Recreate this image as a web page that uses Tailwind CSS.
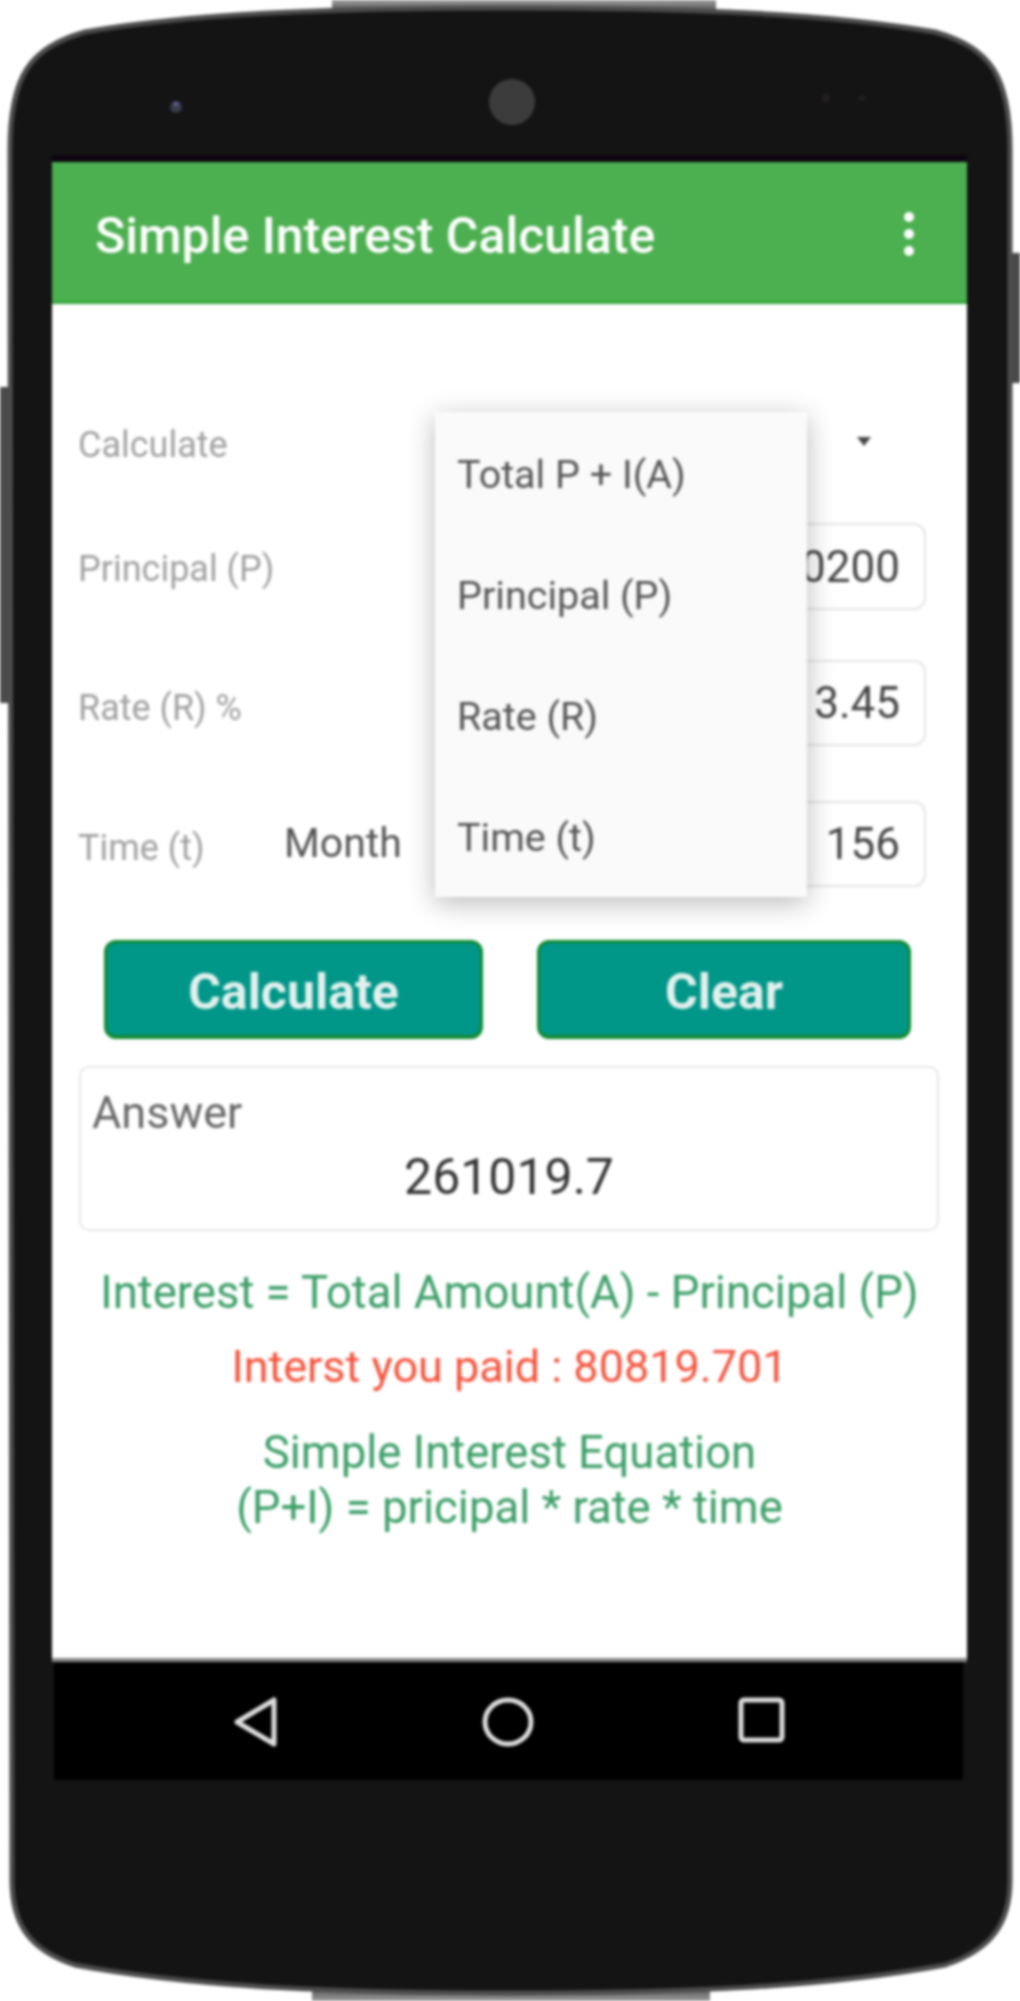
<!DOCTYPE html>
<html><head><meta charset="utf-8"><title>Simple Interest Calculate</title>
<script src="https://cdn.jsdelivr.net/npm/@tailwindcss/browser@4"></script></head>
<body class="m-0 bg-white">
<div class="relative w-[1020px] h-[2001px] overflow-hidden bg-white font-['Roboto',sans-serif] blur-[1.4px]">
  <svg class="absolute inset-0" width="1020" height="2001" viewBox="0 0 1020 2001" fill="none">
    <defs>
      <linearGradient id="topBump" x1="0" y1="0" x2="0" y2="1"><stop offset="0" stop-color="#9a9a9a"/><stop offset="1" stop-color="#444"/></linearGradient>
      <linearGradient id="bottomBump" x1="0" y1="1" x2="0" y2="0"><stop offset="0" stop-color="#9a9a9a"/><stop offset="1" stop-color="#444"/></linearGradient>
    </defs>
    <rect x="0" y="387" width="12" height="316" fill="#4a4a4a"/>
    <rect x="1006" y="253" width="14" height="130" fill="#4a4a4a"/>
    <rect x="332" y="0" width="384" height="14" fill="url(#topBump)"/>
    <rect x="312" y="1985" width="398" height="16" fill="url(#bottomBump)"/>
    <path d="M10 150C10 75 30 48 85 32C200 12 350 8 510 8C670 8 820 12 935 32C990 48 1010 75 1010 150L1010 1880C1010 1925 990 1950 945 1965C820 1988 670 1993 510 1993C350 1993 200 1988 75 1965C30 1950 12 1925 12 1880Z" fill="#141414" stroke="#4c4c4c" stroke-width="5"/>
    <circle cx="176" cy="107" r="6" fill="#3a3a48"/><circle cx="176" cy="104" r="2.5" fill="#5a6090"/>
    <ellipse cx="512" cy="102" rx="23" ry="23" fill="#3c3c3c"/>
    <circle cx="826" cy="98" r="4" fill="#231f1c"/><circle cx="862" cy="98" r="3" fill="#231f1c"/>
  </svg>
  <main class="relative ml-[52px] w-[915px] pt-[155px]">
    <div class="h-[7px] bg-[#0d0510]"></div>
    <header class="h-[142px] bg-[#4caf50] border-b-[3px] border-[#35a53e] flex items-center justify-between pl-[43px] pr-[53px] text-white">
      <h1 class="text-[50px] font-medium leading-none pt-[9px] whitespace-nowrap">Simple Interest Calculate</h1>
      <div class="flex flex-col gap-[7px] pt-[4px]">
        <span class="block w-[10px] h-[10px] rounded-full bg-white"></span>
        <span class="block w-[10px] h-[10px] rounded-full bg-white"></span>
        <span class="block w-[10px] h-[10px] rounded-full bg-white"></span>
      </div>
    </header>
    <section class="relative h-[1358px] bg-white border-b-[4px] border-[#888] flex flex-col">
      <div class="mt-[110px] h-[60px] flex items-center justify-between pl-[26px] pr-[93px] text-[36px] text-[#a0a0a0]">
        <span class="pt-[2px]">Calculate</span>
        <svg class="mb-[6px]" width="20" height="14" viewBox="0 0 20 14"><path d="M3 3H17L10 12Z" fill="#444"/></svg>
      </div>
      <div class="mt-[49px] h-[87px] flex items-center justify-between pl-[26px] pr-[41px]">
        <span class="pt-[5px] text-[36px] text-[#a0a0a0]">Principal (P)</span>
        <div class="w-[400px] h-full border-2 border-[#e4e4e4] rounded-[12px] flex items-center justify-end pr-[24px] text-[44px] text-[#444]">180200</div>
      </div>
      <div class="mt-[50px] h-[86px] flex items-center justify-between pl-[26px] pr-[41px]">
        <span class="pt-[10px] text-[36px] text-[#a0a0a0]">Rate (R) %</span>
        <div class="w-[400px] h-full border-2 border-[#e4e4e4] rounded-[12px] flex items-center justify-end pr-[24px] text-[44px] text-[#444]">3.45</div>
      </div>
      <div class="mt-[55px] h-[86px] flex items-center justify-between pl-[26px] pr-[41px]">
        <div class="flex items-center">
          <span class="pt-[8px] w-[206px] text-[36px] text-[#a0a0a0]">Time (t)</span>
          <span class="text-[41px] text-[#555]">Month</span>
        </div>
        <div class="w-[400px] h-full border-2 border-[#e4e4e4] rounded-[12px] flex items-center justify-end pr-[24px] text-[44px] text-[#444]">156</div>
      </div>
      <div class="mt-[53px] flex gap-[54px] pl-[52px]">
        <button class="w-[379px] h-[99px] pt-[7px] rounded-[12px] bg-[#009688] border-[3px] border-[#118a30] border-b-4 text-[#e3f1ee] text-[50px] font-bold">Calculate</button>
        <button class="w-[374px] h-[99px] pt-[7px] rounded-[12px] bg-[#009688] border-[3px] border-[#118a30] border-b-4 text-[#e3f1ee] text-[50px] font-bold">Clear</button>
      </div>
      <div class="mt-[27px] ml-[27px] w-[860px] h-[165px] border-2 border-[#e6e6e6] rounded-[10px] px-[11px] pt-[22px]">
        <div class="text-[45px] leading-[46px] text-[#666]">Answer</div>
        <div class="mt-[13px] text-[50px] leading-[56px] text-[#333] text-center">261019.7</div>
      </div>
      <p class="mt-[32px] h-[60px] leading-[60px] text-center text-[45.5px] text-[#3c9e68] whitespace-nowrap">Interest = Total Amount(A) - Principal (P)</p>
      <p class="mt-[14px] h-[60px] leading-[60px] text-center text-[45px] text-[#f4533c] whitespace-nowrap">Interst you paid : 80819.701</p>
      <p class="mt-[28px] leading-[55px] text-center text-[45.5px] text-[#3c9e68]">Simple Interest Equation<br>(P+I) = pricipal * rate * time</p>

      <div class="absolute left-[383px] top-[108px] w-[372px] h-[485px] bg-[#fafafa] shadow-[0_6px_26px_rgba(0,0,0,0.28)] pt-[2px] pl-[22px] grid auto-rows-[121px] items-center text-[39.5px] text-[#555]">
        <div>Total P + I(A)</div>
        <div>Principal (P)</div>
        <div>Rate (R)</div>
        <div>Time (t)</div>
      </div>
    </section>
    <nav class="ml-[2px] w-[909px] h-[118px] bg-black relative flex">
      <svg class="absolute left-[179px] top-[35px]" width="45" height="50" viewBox="0 0 45 50" fill="none"><path d="M41 3V47L4 25Z" stroke="#ddd" stroke-width="5" stroke-linejoin="round"/></svg>
      <svg class="absolute left-[428px] top-[35px]" width="52" height="50" viewBox="0 0 52 50" fill="none"><ellipse cx="26" cy="25" rx="23" ry="22" stroke="#ddd" stroke-width="5"/></svg>
      <svg class="absolute left-[684px] top-[35px]" width="47" height="46" viewBox="0 0 47 46" fill="none"><rect x="3" y="3" width="41" height="40" rx="3" stroke="#ddd" stroke-width="5"/></svg>
    </nav>
  </main>
</div>
</body></html>
